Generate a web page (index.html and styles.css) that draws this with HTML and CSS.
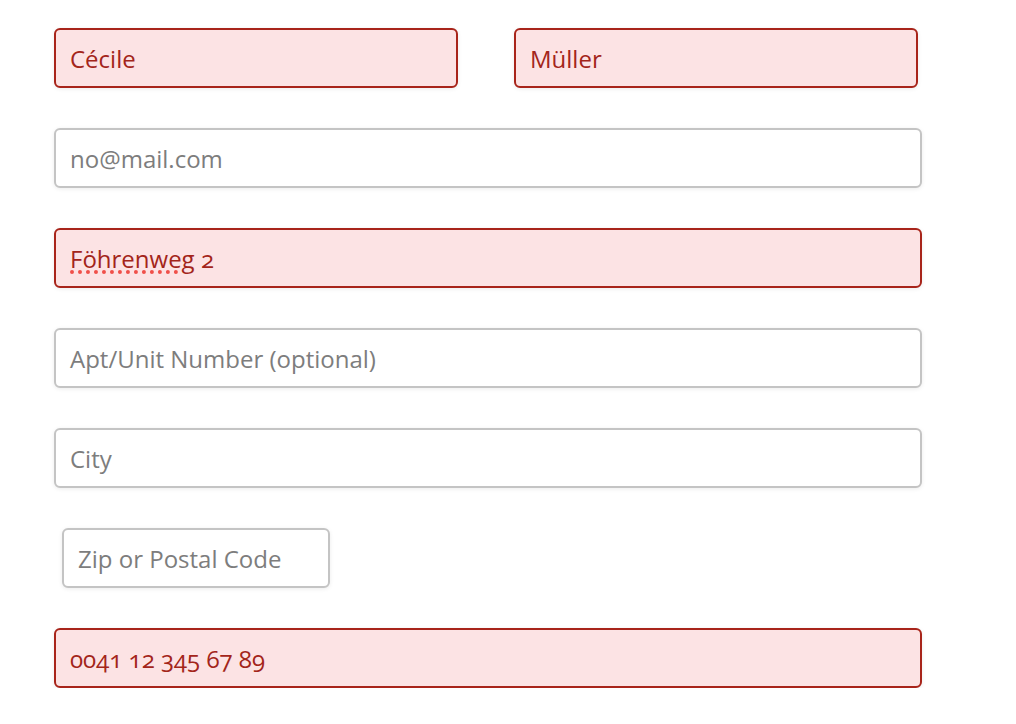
FILE: index.html
```html
<!DOCTYPE html>
<html lang="de">
<head>
<meta charset="utf-8">
<title>Address form</title>
<link rel="stylesheet" href="styles.css">
</head>
<body>
<form class="form">
  <div class="row row-split">
    <div class="field field-error half">Cécile</div>
    <div class="field field-error half">Müller</div>
  </div>
  <div class="row">
    <div class="field full placeholder">no@mail.com</div>
  </div>
  <div class="row">
    <div class="field field-error full"><span class="misspelled">Föhrenweg</span> 2</div>
  </div>
  <div class="row">
    <div class="field full placeholder">Apt/Unit Number (optional)</div>
  </div>
  <div class="row">
    <div class="field full placeholder">City</div>
  </div>
  <div class="row">
    <div class="field zip placeholder">Zip or Postal Code</div>
  </div>
  <div class="row">
    <div class="field field-error full">0041 12 345 67 89</div>
  </div>
</form>
</body>
</html>
```

FILE: styles.css
```css
html, body {
  margin: 0;
  padding: 0;
  background: #ffffff;
}

body {
  font-family: "Open Sans", "Lato", "DejaVu Sans", sans-serif;
}

.form {
  display: flex;
  flex-direction: column;
  gap: 40px;
  padding: 28px 0 0 54px;
}

.row {
  display: flex;
}

.row-split {
  gap: 56px;
}

.field {
  box-sizing: border-box;
  height: 60px;
  border: 2px solid #c4c4c4;
  border-radius: 6px;
  background: #ffffff;
  padding: 0 14px;
  display: flex;
  align-items: center;
  font-size: 24px;
  font-variant-numeric: oldstyle-nums;
  color: #333;
  white-space: pre;
  box-shadow: 0 1px 4px rgba(0, 0, 0, 0.08);
}

.placeholder {
  color: #7d7d7d;
}

.field-error {
  border-color: #a8241a;
  background: #fce3e4;
  color: #a3251a;
}

.half {
  width: 404px;
}

.full {
  width: 868px;
}

.zip {
  width: 268px;
  margin-left: 8px;
}

.misspelled {
  text-decoration: underline dotted #f0504a;
  text-decoration-thickness: 4px;
  text-underline-offset: 3px;
}
```
